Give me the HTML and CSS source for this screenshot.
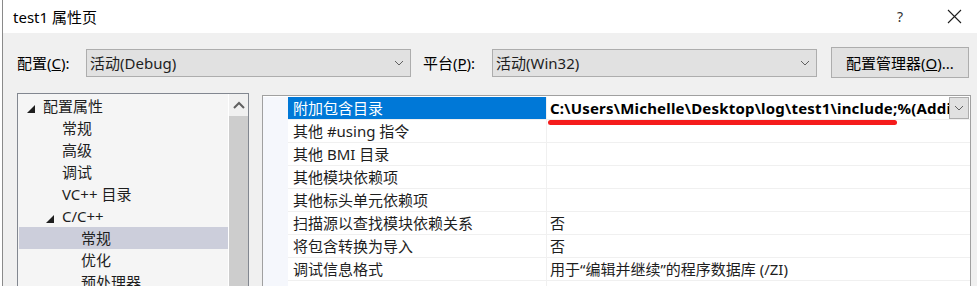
FILE: index.html
```html
<!DOCTYPE html>
<html>
    <head>
        <meta charset="UTF-8">
        <meta name="viewport" content="width=device-width, initial-scale=1.0">
        <link rel="stylesheet" href="styles.css">
    </head>
    <body>
        <div class="window">
            <div class="titlebar">
                <span class="title">test1 属性页</span>
                <span class="help">?</span>
                <svg class="close" width="15" height="15" viewBox="0 0 15 15"><path d="M1 1 L14 14 M14 1 L1 14" stroke="#1e1e1e" stroke-width="1.1" fill="none"/></svg>
            </div>

            <div class="toolbar">
                <span class="label">配置(<u>C</u>):</span>
                <div class="combo">
                    <span>活动(Debug)</span>
                    <svg width="10" height="6" viewBox="0 0 10 6"><polyline points="1,1 5,5 9,1" stroke="#606060" stroke-width="1" fill="none"/></svg>
                </div>
                <span class="label label-2">平台(<u>P</u>):</span>
                <div class="combo">
                    <span>活动(Win32)</span>
                    <svg width="10" height="6" viewBox="0 0 10 6"><polyline points="1,1 5,5 9,1" stroke="#606060" stroke-width="1" fill="none"/></svg>
                </div>
                <button class="manager">配置管理器(<u>O</u>)...</button>
            </div>

            <div class="main">
                <div class="tree">
                    <ul class="tree-list">
                        <li class="lvl-1"><svg class="tri" width="8" height="8" viewBox="0 0 8 8"><polygon points="8,0 8,8 0,8" fill="#1e1e1e"/></svg>配置属性</li>
                        <li class="lvl-2">常规</li>
                        <li class="lvl-2">高级</li>
                        <li class="lvl-2">调试</li>
                        <li class="lvl-2">VC++ 目录</li>
                        <li class="lvl-2 open"><svg class="tri" width="8" height="8" viewBox="0 0 8 8"><polygon points="8,0 8,8 0,8" fill="#1e1e1e"/></svg>C/C++</li>
                        <li class="lvl-3 selected">常规</li>
                        <li class="lvl-3">优化</li>
                        <li class="lvl-3">预处理器</li>
                    </ul>
                    <div class="scrollbar">
                        <div class="scroll-up">
                            <svg width="12" height="8" viewBox="0 0 12 8"><polyline points="1,7 6,2 11,7" stroke="#606060" stroke-width="2" fill="none"/></svg>
                        </div>
                        <div class="scroll-thumb"></div>
                    </div>
                </div>

                <div class="grid">
                    <div class="gutter"></div>
                    <div class="rows">
                        <div class="row">
                            <div class="name selected">附加包含目录</div>
                            <div class="value bold">
                                <span class="value-text">C:\Users\Michelle\Desktop\log\test1\include;%(AdditionalIncludeDirectories)</span>
                                <span class="drop">
                                    <svg width="10" height="6" viewBox="0 0 10 6"><polyline points="1,1 5,5 9,1" stroke="#606060" stroke-width="1" fill="none"/></svg>
                                </span>
                            </div>
                        </div>
                        <div class="row"><div class="name">其他 #using 指令</div><div class="value"></div></div>
                        <div class="row"><div class="name">其他 BMI 目录</div><div class="value"></div></div>
                        <div class="row"><div class="name">其他模块依赖项</div><div class="value"></div></div>
                        <div class="row"><div class="name">其他标头单元依赖项</div><div class="value"></div></div>
                        <div class="row"><div class="name">扫描源以查找模块依赖关系</div><div class="value">否</div></div>
                        <div class="row"><div class="name">将包含转换为导入</div><div class="value">否</div></div>
                        <div class="row"><div class="name">调试信息格式</div><div class="value">用于“编辑并继续”的程序数据库 (/ZI)</div></div>
                        <div class="row"><div class="name"></div><div class="value"></div></div>
                    </div>
                    <div class="mark"></div>
                </div>
            </div>
        </div>
    </body>
</html>
```

FILE: styles.css
```css
html, body {
    margin: 0;
    height: 100%;
    overflow: hidden;
}
body {
    background: #ffffff;
    font-family: "Noto Sans", "Noto Sans CJK SC", sans-serif;
    font-size: 15px;
    color: #1e1e1e;
}
.window {
    margin-left: 2px;
    border-left: 1px solid #8a8a8a;
    height: 100%;
    background: #f0f0f0;
}

/* title bar */
.titlebar {
    height: 33px;
    background: #ffffff;
    display: flex;
    align-items: center;
    padding: 0 15px 0 10px;
}
.title {
    flex: 1;
    color: #000;
}
.help {
    color: #333;
    font-size: 14px;
    margin-right: 44px;
}

/* config row */
.toolbar {
    display: flex;
    align-items: center;
    padding: 14px 0 0 14px;
}
.label {
    width: 69px;
    color: #000;
}
.label-2 {
    margin-left: 12px;
}
.combo {
    width: 314px;
    height: 26px;
    border: 1px solid #adadad;
    background: #e1e1e1;
    display: flex;
    align-items: center;
    justify-content: space-between;
    padding: 0 6px 0 3px;
}
.manager {
    margin-left: 14px;
    width: 138px;
    height: 31px;
    border: 1px solid #adadad;
    background: #e1e1e1;
    font: inherit;
    color: #000;
    padding: 0;
}

/* tree + grid */
.main {
    display: flex;
    align-items: flex-start;
    margin-top: 15px;
}
.tree {
    margin-left: 14px;
    width: 230px;
    height: 220px;
    border: 1px solid #828790;
    background: #f5f5f5;
    display: flex;
}
.tree-list {
    list-style: none;
    margin: 0;
    padding: 1px 0 0 1px;
    flex: 1;
}
.tree-list li {
    height: 22px;
    line-height: 22px;
    white-space: nowrap;
}
.tree-list .tri {
    margin-right: 8px;
    vertical-align: -1px;
}
.lvl-1 { padding-left: 8px; }
.lvl-2 { padding-left: 43px; }
.lvl-2.open { padding-left: 27px; }
.lvl-3 { padding-left: 62px; }
.tree-list .selected {
    background: #cccedb;
}
.scrollbar {
    width: 19px;
    border-left: 1px solid #ffffff;
    background: #f0f0f0;
}
.scroll-up {
    height: 22px;
    display: flex;
    align-items: center;
    justify-content: center;
}
.scroll-thumb {
    background: #cdcdcd;
    height: 200px;
}

.grid {
    position: relative;
    margin-top: 2px;
    margin-left: 13px;
    width: 707px;
    height: 220px;
    border: 1px solid #a0a0a0;
    background: #ffffff;
    display: flex;
    padding-top: 1px;
}
.gutter {
    width: 25px;
    background: #f5f7fc;
}
.rows {
    flex: 1;
    min-width: 0;
}
.row {
    display: flex;
    height: 22px;
    border-bottom: 1px solid #f0f0f0;
}
.name {
    width: 253px;
    padding-left: 5px;
    line-height: 22px;
    border-right: 1px solid #f0f0f0;
    white-space: nowrap;
}
.name.selected {
    background: #0078d7;
    color: #ffffff;
}
.value {
    flex: 1;
    min-width: 0;
    padding-left: 3px;
    line-height: 22px;
    display: flex;
    white-space: nowrap;
}
.value.bold {
    font-weight: bold;
    color: #000;
    letter-spacing: 0.2px;
}
.value-text {
    flex: 1;
    overflow: hidden;
}
.drop {
    width: 18px;
    height: 20px;
    border: 1px solid #adadad;
    background: #e1e1e1;
    display: flex;
    align-items: center;
    justify-content: center;
    margin-right: 1px;
}

/* red marker drawn over the value */
.mark {
    position: absolute;
    left: 285px;
    top: 24px;
    width: 349px;
    height: 5px;
    border-radius: 3px;
    background: #f51c1c;
}
```
